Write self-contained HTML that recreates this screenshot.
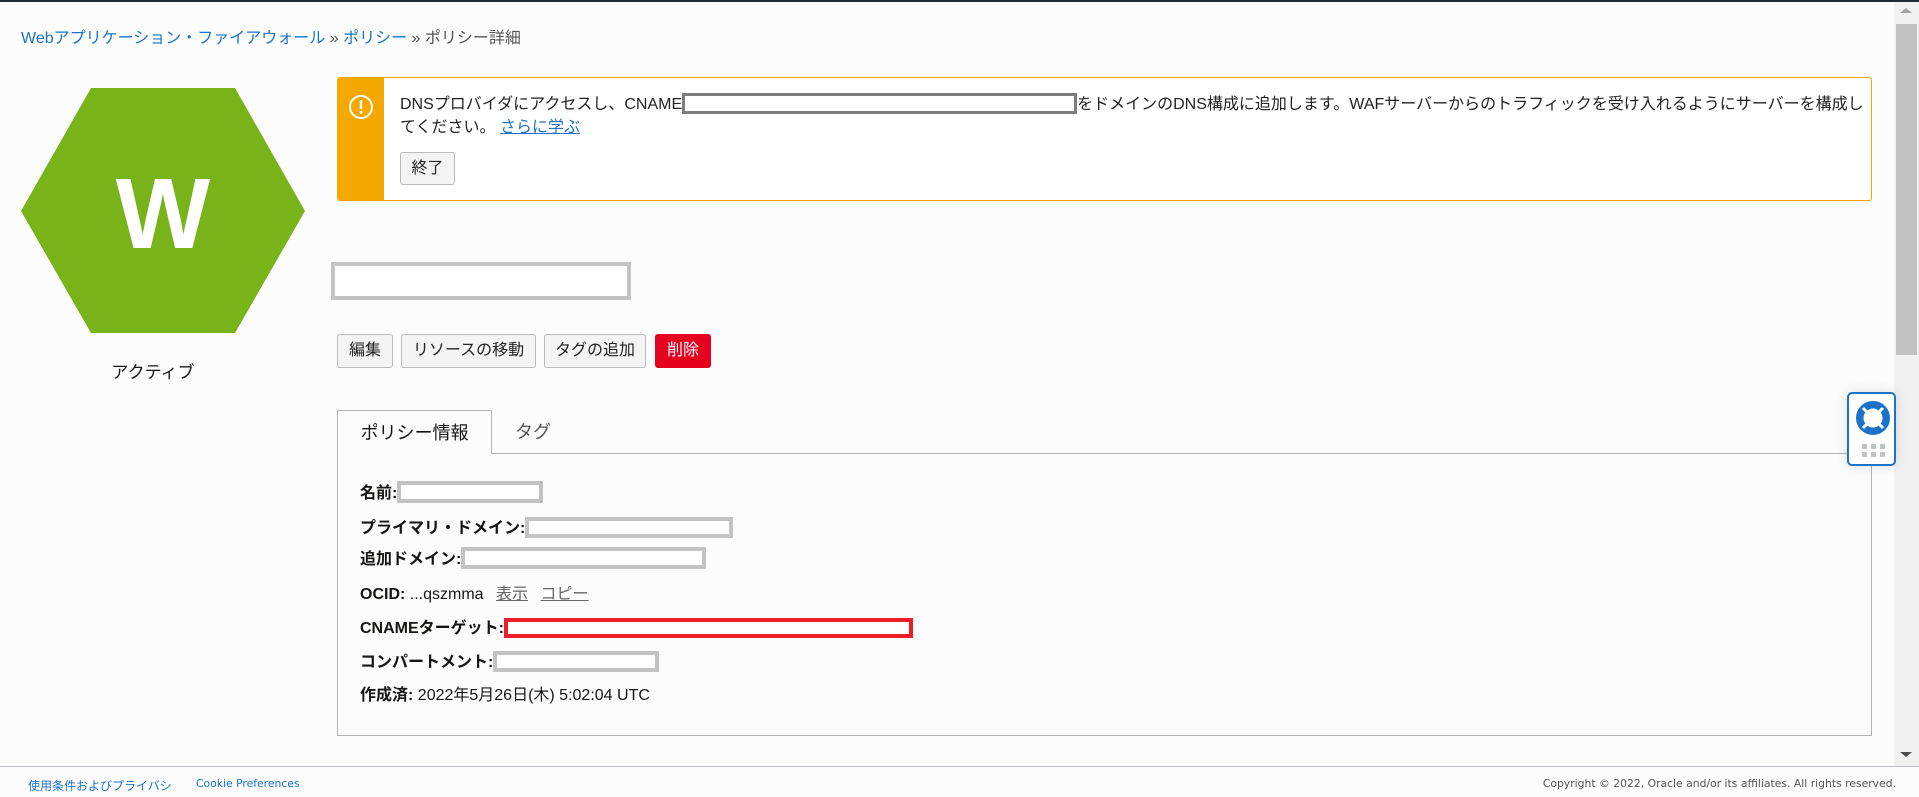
<!DOCTYPE html>
<html><head><meta charset="utf-8">
<style>
*{margin:0;padding:0;box-sizing:border-box}
body{width:1919px;height:797px;overflow:hidden;background:#fcfcfc;font-family:"Liberation Sans","Noto Sans CJK JP",sans-serif;color:#161513;position:relative}
.abs{position:absolute}
.topbar{left:0;top:0;width:1919px;height:2px;background:#1f2a36}
.bc{left:21px;top:24px;font-size:16px;color:#555;white-space:nowrap}
.bc a{color:#1a73c9;text-decoration:none}
.status{left:53px;top:358px;width:200px;text-align:center;font-size:17px}
.warn{left:337px;top:77px;width:1535px;height:124px;border:1px solid #f0a800;border-radius:3px;background:#fff;overflow:hidden}
.warn .strip{position:absolute;left:0;top:0;width:46px;height:100%;background:#f5a800}
.warn .txt{position:absolute;left:62px;top:15px;font-size:16px;line-height:23px;white-space:nowrap;color:#222}
.warn .txt a{color:#1a73c9;text-decoration:underline}
.btn{position:absolute;height:34px;border:1px solid #b9bcbf;border-radius:3px;background:#f4f4f5;font-size:16px;line-height:32px;text-align:center;color:#222;white-space:nowrap}
.red{background:#e60020;border-color:#e60020;color:#fff}
.redact{position:absolute;border:4px solid #c3c3c3;background:#fff}
.ib{display:inline-block;border:4px solid #c3c3c3;background:#fff;vertical-align:-5px}
.tabs{left:337px;top:453px;width:1535px;height:283px;border:1px solid #b3b3b3;border-top:none}
.tabline{left:491px;top:453px;width:1381px;height:1px;background:#b3b3b3}
.tab1{left:337px;top:410px;width:155px;height:44px;border:1px solid #b3b3b3;border-bottom:none;background:#fcfcfc;font-size:18px;line-height:44px;text-align:center}
.tab2{left:515px;top:418px;font-size:18px;color:#555}
.f{position:absolute;left:360px;font-size:16px;white-space:nowrap}
.f u{color:#666;margin-left:8px}
.foot{left:0;top:766px;width:1919px;height:31px;border-top:1px solid #b8bcc1;background:#fcfcfc;font-family:"DejaVu Sans","Noto Sans CJK JP",sans-serif;font-size:10.8px}
.sb{left:1894px;top:2px;width:25px;height:764px;background:#f1f1f1}
.thumb{left:1896px;top:24px;width:21px;height:331px;background:#c1c1c1}
.help{left:1847px;top:392px;width:49px;height:74px;border:2px solid #1a73c9;border-radius:5px;background:#fff;box-shadow:0 0 12px rgba(0,0,0,.12)}
.dot{position:absolute;width:5px;height:5px;background:#c0c4c8}
</style></head><body>
<div class="abs topbar"></div>
<div class="abs bc"><a>Webアプリケーション・ファイアウォール</a> » <a>ポリシー</a> » ポリシー詳細</div>

<svg class="abs" style="left:21px;top:88px" width="284" height="246" viewBox="0 0 284 246">
<polygon points="70,0 214,0 284,123 214,245 70,245 0,123" fill="#78b31a"/>
<text x="142" y="160" text-anchor="middle" font-family="Liberation Sans,sans-serif" font-weight="bold" font-size="100" fill="#fff">W</text>
</svg>
<div class="abs status">アクティブ</div>

<div class="abs warn"><div class="strip"></div>
<svg style="position:absolute;left:10px;top:16px" width="26" height="26" viewBox="0 0 26 26"><circle cx="13" cy="13" r="11" fill="none" stroke="#fff" stroke-width="2"/><rect x="11.8" y="6" width="2.4" height="9" fill="#fff"/><rect x="11.8" y="17" width="2.4" height="2.6" fill="#fff"/></svg>
<div class="txt">DNSプロバイダにアクセスし、CNAME<span style="display:inline-block;width:395px;height:21px;border:3px solid #7d7d7d;vertical-align:-5px;background:#fff"></span>をドメインのDNS構成に追加します。WAFサーバーからのトラフィックを受け入れるようにサーバーを構成し<br>てください。 <a>さらに学ぶ</a></div>
<div class="btn" style="left:62px;top:74px;width:55px;height:33px">終了</div>
</div>

<div class="redact" style="left:331px;top:262px;width:300px;height:38px"></div>

<div class="btn" style="left:337px;top:334px;width:56px">編集</div>
<div class="btn" style="left:401px;top:334px;width:135px">リソースの移動</div>
<div class="btn" style="left:544px;top:334px;width:102px">タグの追加</div>
<div class="btn red" style="left:655px;top:334px;width:56px">削除</div>

<div class="abs tabs"></div>
<div class="abs tabline"></div>
<div class="abs tab1">ポリシー情報</div>
<div class="abs tab2">タグ</div>

<div class="f" style="top:479px"><b>名前:</b><span class="ib" style="width:146px;height:22px"></span></div>
<div class="f" style="top:514px"><b>プライマリ・ドメイン:</b><span class="ib" style="width:208px;height:21px"></span></div>
<div class="f" style="top:545px"><b>追加ドメイン:</b><span class="ib" style="width:245px;height:22px"></span></div>
<div class="f" style="top:580px"><b>OCID:</b> ...qszmma <u>表示</u> <u>コピー</u></div>
<div class="f" style="top:614px"><b>CNAMEターゲット:</b><span class="ib" style="width:409px;height:20px;border-color:#ee1c25"></span></div>
<div class="f" style="top:648px"><b>コンパートメント:</b><span class="ib" style="width:166px;height:21px"></span></div>
<div class="f" style="top:681px"><b>作成済:</b> 2022年5月26日(木) 5:02:04 UTC</div>

<div class="abs sb"></div>
<div class="abs thumb"></div>
<div class="abs" style="left:1900px;top:8px;width:0;height:0;border:6px solid transparent;border-bottom:5px solid #a3a3a3;border-top:none"></div>
<div class="abs" style="left:1900px;top:752px;width:0;height:0;border:6px solid transparent;border-top:5px solid #505050;border-bottom:none"></div>

<div class="abs help">
<svg style="position:absolute;left:6px;top:6px" width="36" height="36" viewBox="0 0 36 36"><circle cx="18" cy="18" r="13.25" fill="none" stroke="#1a73c9" stroke-width="7.5"/><path d="M8 8 L13 13 M28 8 L23 13 M8 28 L13 23 M28 28 L23 23" stroke="#fff" stroke-width="3"/></svg>
<div class="dot" style="left:13px;top:50px"></div><div class="dot" style="left:22px;top:50px"></div><div class="dot" style="left:31px;top:50px"></div>
<div class="dot" style="left:13px;top:58px"></div><div class="dot" style="left:22px;top:58px"></div><div class="dot" style="left:31px;top:58px"></div>
</div>

<div class="abs foot">
<span style="position:absolute;left:28px;top:10px;color:#1a73c9;font-family:'Liberation Sans','Noto Sans CJK JP',sans-serif;font-size:12px">使用条件およびプライバシ</span>
<span style="position:absolute;left:196px;top:10px;color:#1a73c9">Cookie Preferences</span>
<span style="position:absolute;right:23px;top:10px;color:#555">Copyright © 2022, Oracle and/or its affiliates. All rights reserved.</span>
</div>
</body></html>
